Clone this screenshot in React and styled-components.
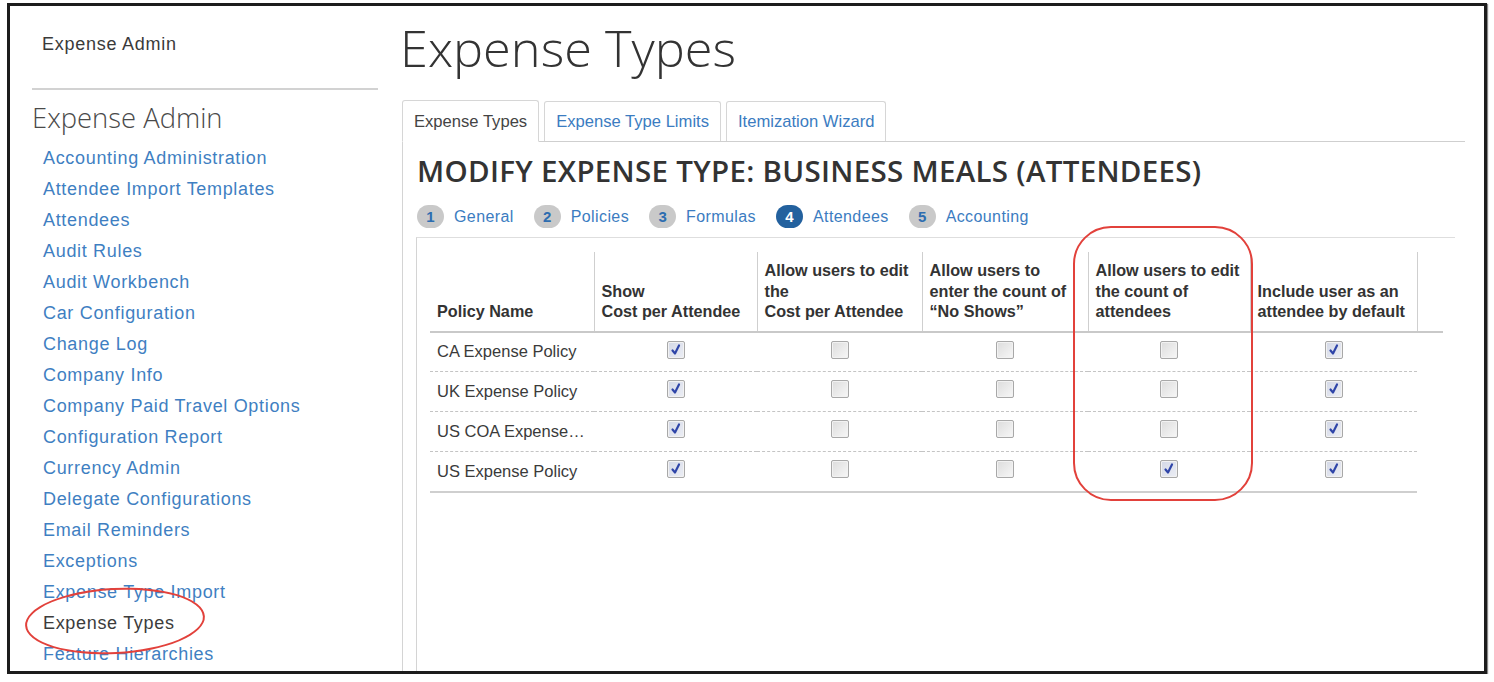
import React from "react";
import styled, { createGlobalStyle } from "styled-components";

const GlobalStyle = createGlobalStyle`
  html, body { margin: 0; padding: 0; background: #ffffff; }
  body { font-family: "Liberation Sans", Arial, sans-serif; }
  * { box-sizing: border-box; }
`;

const Frame = styled.div`
  position: relative;
  margin: 3px 7px 0 7px;
  width: 1480px;
  height: 671px;
  border: 3px solid #1c1c1c;
  box-shadow: 1px 1px 1px #888;
  display: flex;
  overflow: hidden;
  background: #fff;
`;

const Sidebar = styled.aside`
  width: 370px;
  padding: 27px 0 0 22px;
  display: flex;
  flex-direction: column;
`;

const TopCrumb = styled.div`
  padding-left: 10px;
  font-size: 18px;
  line-height: 22px;
  letter-spacing: 0.75px;
  color: #3a3a3a;
`;

const Divider = styled.div`
  margin-top: 33px;
  width: 346px;
  height: 2px;
  background: #d2d2d2;
`;

const SideHeading = styled.h2`
  margin: 11px 0 8px 0;
  font-family: "Open Sans", sans-serif;
  font-weight: 300;
  font-size: 27.4px;
  line-height: 34px;
  color: #4a4a4a;
`;

const NavLink = styled.div`
  padding-left: 11px;
  font-size: 18px;
  line-height: 31px;
  letter-spacing: 0.68px;
  white-space: nowrap;
  color: ${(p) => (p.$current ? "#3c3c3c" : "#3f7fc2")};
`;

const Main = styled.main`
  flex: 1;
  margin-left: 22px;
  padding-right: 19px;
  display: flex;
  flex-direction: column;
`;

const PageTitle = styled.h1`
  margin: 12px 0 0 -2px;
  font-family: "Open Sans", sans-serif;
  font-weight: 300;
  font-size: 50.5px;
  line-height: 60px;
  color: #333;
`;

const TabBar = styled.div`
  margin-top: 22px;
  display: flex;
  align-items: flex-end;
  gap: 5px;
  border-bottom: 1px solid #cfcfcf;
`;

const Tab = styled.div`
  height: ${(p) => (p.$active ? "42px" : "40px")};
  margin-bottom: ${(p) => (p.$active ? "-1px" : "0")};
  padding: 0 11px;
  border: 1px solid #d6d6d6;
  border-bottom: ${(p) => (p.$active ? "1px solid #fff" : "none")};
  border-radius: 3px 3px 0 0;
  background: #fff;
  font-size: 16.6px;
  line-height: ${(p) => (p.$active ? "41px" : "39px")};
  color: ${(p) => (p.$active ? "#444" : "#3b7cc1")};
  white-space: nowrap;
`;

const Panel = styled.section`
  flex: 1;
  border-left: 1px solid #d4d4d4;
  padding-left: 14px;
  display: flex;
  flex-direction: column;
`;

const SectionTitle = styled.h3`
  margin: 12px 0 0 0;
  font-family: "Open Sans", sans-serif;
  font-weight: 600;
  font-size: 29.5px;
  letter-spacing: 0.3px;
  line-height: 34px;
  color: #333;
  white-space: nowrap;
`;

const Steps = styled.div`
  margin-top: 17px;
  display: flex;
  align-items: center;
  height: 23px;
`;

const Step = styled.div`
  display: flex;
  align-items: center;
  gap: 10px;
  margin-right: 20px;
  font-size: 16px;
  letter-spacing: 0.4px;
  color: #3b7cc1;
`;

const Badge = styled.span`
  width: 27px;
  height: 23px;
  border-radius: 12px;
  display: inline-flex;
  align-items: center;
  justify-content: center;
  font-weight: bold;
  font-size: 15px;
  letter-spacing: 0;
  background: ${(p) => (p.$active ? "#23619e" : "#c9c9c9")};
  color: ${(p) => (p.$active ? "#fff" : "#2d6db0")};
`;

const TableBox = styled.div`
  flex: 1;
  margin: 9px 10px 0 -1px;
  border-top: 1px solid #dedede;
  border-left: 1px solid #d4d4d4;
  padding: 14px 0 0 13px;
`;

const Table = styled.table`
  border-collapse: collapse;
  table-layout: fixed;
  width: 1013px;
`;

const Th = styled.th`
  width: ${(p) => p.$w}px;
  padding: 8px 4px 9px 7px;
  vertical-align: bottom;
  text-align: left;
  font-size: 16.2px;
  line-height: 20.5px;
  font-weight: bold;
  color: #333;
  white-space: nowrap;
  overflow: hidden;
  border-right: ${(p) => (p.$filler ? "none" : "1px solid #cfcfcf")};
  border-bottom: 2px solid #c9c9c9;
`;

const Td = styled.td`
  height: 40px;
  padding: 0 7px;
  font-size: 16.5px;
  color: #3a3a3a;
  white-space: nowrap;
  text-align: ${(p) => (p.$center ? "center" : "left")};
  vertical-align: middle;
  border-bottom: ${(p) =>
    p.$filler ? "none" : p.$last ? "2px solid #cfcfcf" : "1px dashed #c4c4c4"};
`;

const Box = styled.span`
  display: inline-block;
  width: 18px;
  height: 18px;
  vertical-align: middle;
  border: 1px solid #a8a8a8;
  border-radius: 2px;
  background: ${(p) =>
    p.$checked
      ? "linear-gradient(135deg, #d3d8e6, #eceef5)"
      : "linear-gradient(135deg, #dcdcdc, #f7f7f7)"};
  box-shadow: inset 0 0 0 1px #f2f2f2;
  position: relative;
  top: -3px;
`;

const RoundOutline = styled.div`
  position: absolute;
  left: 1063px;
  top: 220px;
  width: 180px;
  height: 275px;
  border: 2.5px solid #e2413b;
  border-radius: 38px;
  pointer-events: none;
`;

const EllipseOutline = styled.div`
  position: absolute;
  left: 15px;
  top: 582px;
  width: 180px;
  height: 66px;
  border: 2.5px solid #e2413b;
  border-radius: 50%;
  transform: rotate(-3deg);
  pointer-events: none;
`;

function Checkbox({ checked }) {
  return (
    <Box $checked={checked}>
      {checked && (
        <svg width="16" height="16" viewBox="0 0 16 16" style={{ position: "absolute", left: 0, top: 0 }}>
          <path d="M4.5 8.5 L7 11.5 L11 3.5" fill="none" stroke="#2f45a8" strokeWidth="2.2" strokeLinecap="round" strokeLinejoin="round" />
        </svg>
      )}
    </Box>
  );
}

const links = [
  "Accounting Administration",
  "Attendee Import Templates",
  "Attendees",
  "Audit Rules",
  "Audit Workbench",
  "Car Configuration",
  "Change Log",
  "Company Info",
  "Company Paid Travel Options",
  "Configuration Report",
  "Currency Admin",
  "Delegate Configurations",
  "Email Reminders",
  "Exceptions",
  "Expense Type Import",
  "Expense Types",
  "Feature Hierarchies",
];

const steps = [
  { n: 1, label: "General" },
  { n: 2, label: "Policies" },
  { n: 3, label: "Formulas" },
  { n: 4, label: "Attendees", active: true },
  { n: 5, label: "Accounting" },
];

const columns = [
  { w: 164, lines: ["Policy Name"] },
  { w: 163, lines: ["Show", "Cost per Attendee"] },
  { w: 165, lines: ["Allow users to edit", "the", "Cost per Attendee"] },
  { w: 166, lines: ["Allow users to", "enter the count of", "\u201CNo Shows\u201D"] },
  { w: 162, lines: ["Allow users to edit", "the count of", "attendees"] },
  { w: 167, lines: ["Include user as an", "attendee by default"] },
];

const rows = [
  { name: "CA Expense Policy", v: [true, false, false, false, true] },
  { name: "UK Expense Policy", v: [true, false, false, false, true] },
  { name: "US COA Expense\u2026", v: [true, false, false, false, true] },
  { name: "US Expense Policy", v: [true, false, false, true, true] },
];

export default function App() {
  return (
    <>
      <GlobalStyle />
      <Frame>
        <Sidebar>
          <TopCrumb>Expense Admin</TopCrumb>
          <Divider />
          <SideHeading>Expense Admin</SideHeading>
          {links.map((l) => (
            <NavLink key={l} $current={l === "Expense Types"}>
              {l}
            </NavLink>
          ))}
        </Sidebar>
        <Main>
          <PageTitle>Expense Types</PageTitle>
          <TabBar>
            <Tab $active>Expense Types</Tab>
            <Tab>Expense Type Limits</Tab>
            <Tab>Itemization Wizard</Tab>
          </TabBar>
          <Panel>
            <SectionTitle>MODIFY EXPENSE TYPE: BUSINESS MEALS (ATTENDEES)</SectionTitle>
            <Steps>
              {steps.map((s) => (
                <Step key={s.n}>
                  <Badge $active={s.active}>{s.n}</Badge>
                  {s.label}
                </Step>
              ))}
            </Steps>
            <TableBox>
              <Table>
                <thead>
                  <tr>
                    {columns.map((c, i) => (
                      <Th key={i} $w={c.w}>
                        {c.lines.map((ln, j) => (
                          <React.Fragment key={j}>
                            {j > 0 && <br />}
                            {ln}
                          </React.Fragment>
                        ))}
                      </Th>
                    ))}
                    <Th $w={26} $filler />
                  </tr>
                </thead>
                <tbody>
                  {rows.map((r, ri) => {
                    const last = ri === rows.length - 1;
                    return (
                      <tr key={r.name}>
                        <Td $last={last}>{r.name}</Td>
                        {r.v.map((c, ci) => (
                          <Td key={ci} $center $last={last}>
                            <Checkbox checked={c} />
                          </Td>
                        ))}
                        <Td $filler />
                      </tr>
                    );
                  })}
                </tbody>
              </Table>
            </TableBox>
          </Panel>
        </Main>
        <RoundOutline />
        <EllipseOutline />
      </Frame>
    </>
  );
}
